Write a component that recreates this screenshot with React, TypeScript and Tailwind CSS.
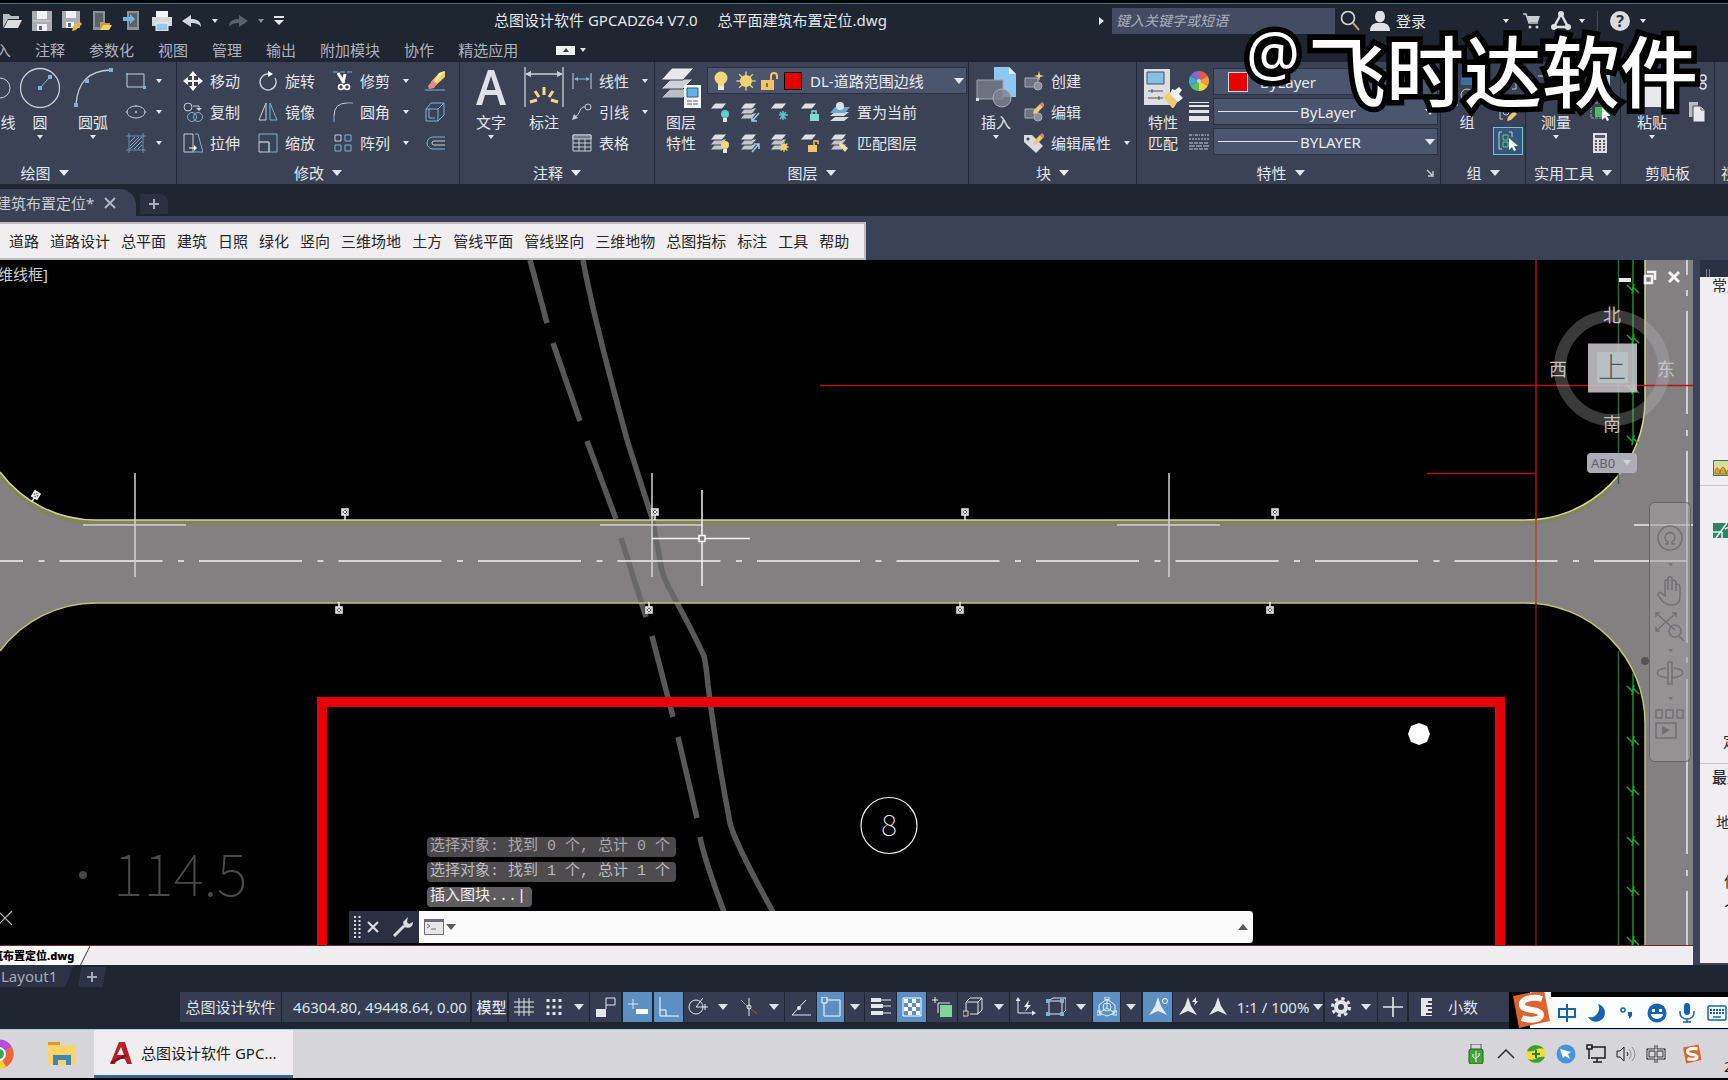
import React from 'react';

type Kids = { children?: React.ReactNode };

function Svg({ w = 20, h = 20, box, children }: Kids & { w?: number; h?: number; box?: string }) {
  return (
    <svg width={w} height={h} viewBox={box ?? `0 0 ${w} ${h}`} fill="none" className="block shrink-0" aria-hidden="true">
      {children}
    </svg>
  );
}

function Caret({ big = false, up = false }: { big?: boolean; up?: boolean }) {
  return big ? (
    <Svg w={10} h={6}>
      <path d={up ? 'M0 6h10L5 0z' : 'M0 0h10L5 6z'} fill="currentColor" />
    </Svg>
  ) : (
    <Svg w={6} h={4}>
      <path d="M0 0h6L3 4z" fill="currentColor" />
    </Svg>
  );
}

const G = '#c9cdd6';
const B = '#7fb2d4';

/* ---------- quick access ---------- */
const quick: Record<string, React.ReactNode> = {
  打开: (
    <Svg>
      <path d="M1 17V3h6l2 2h8v3H6z" fill="#b9bcc2" />
      <path d="M6 9h14l-4 8H2z" fill="#dcdde0" />
    </Svg>
  ),
  保存: (
    <Svg>
      <path d="M0 0h20v20H0z" fill="#a9acb3" />
      <path d="M5 0h10v8H5zM5 13h10v7H5z" fill="#f1f1f3" />
      <path d="M7 15h3v4H7z" fill="#60636c" />
      <path d="M1 10h18" stroke="#d3d5da" />
    </Svg>
  ),
  另存为: (
    <Svg>
      <path d="M0 0h18v17H0z" fill="#a9acb3" />
      <path d="M4 0h10v7H4zM4 11h8v6H4z" fill="#f1f1f3" />
      <path d="M6 12h3v4H6z" fill="#60636c" />
      <path d="M11 16l6-6 3 3-6 6-4 1z" fill="#e5b356" />
    </Svg>
  ),
  打开移动文件: (
    <Svg>
      <path d="M1 0h12v19H1z" fill="#8c9098" />
      <path d="M3 2h8v14H3z" fill="#5c6069" />
      <path d="M8 18V11h4l1 1h5v2h-7z" fill="#c99c3a" />
      <path d="M11 14h9l-3 5H8z" fill="#f3cf74" />
    </Svg>
  ),
  保存到移动: (
    <Svg>
      <path d="M5 0h12v19H5z" fill="#8c9098" />
      <path d="M7 2h8v14H7z" fill="#5c6069" />
      <path d="M1 6h7V3l5 5-5 5v-3H1z" fill="#6fb4e2" />
    </Svg>
  ),
  打印: (
    <Svg>
      <path d="M4 0h12v6H4z" fill="#f3f3f5" />
      <path d="M0 6h20v9H0z" fill="#d6d8dc" />
      <path d="M4 12h12v8H4z" fill="#9cc6e6" stroke="#f3f3f5" />
    </Svg>
  ),
};

/* ---------- ribbon small icons ---------- */
const I = {
  rect: (
    <Svg>
      <path d="M1 3h17v13H1z" stroke={G} />
      <path d="M0 2h2v2H0zM17 15h3v3h-3z" fill={B} />
    </Svg>
  ),
  ellipse: (
    <Svg>
      <ellipse cx="10" cy="10" rx="9" ry="6" stroke={G} />
      <path d="M9 9h2v2H9zM9 3h2v2H9zM0 9h2v2H0zM18 9h2v2h-2z" fill={B} />
    </Svg>
  ),
  hatch: (
    <Svg>
      <path d="M3 0v20M17 0v20M0 3h20M0 17h20" stroke={B} opacity=".7" />
      <path d="M4 9l5-5M4 13l9-9M4 16L16 4M8 16l8-8M12 16l4-4" stroke={B} />
    </Svg>
  ),
  move: (
    <Svg>
      <path d="M10 2v16M2 10h16" stroke="#fff" strokeWidth="2" />
      <path d="M10 0l4 5H6zM10 20l4-5H6zM0 10l5-4v8zM20 10l-5-4v8z" fill="#fff" />
    </Svg>
  ),
  rotate: (
    <Svg>
      <path d="M11 3a8 8 0 1 0 6 4" stroke={G} strokeWidth="1.4" />
      <path d="M10 0l5 3-5 3z" fill="#fff" />
    </Svg>
  ),
  trim: (
    <Svg>
      <path d="M0 1h20" stroke={B} strokeDasharray="5 2" />
      <path d="M5 2l6 10M12 3l-2 9" stroke="#fff" strokeWidth="3" />
      <circle cx="8" cy="16" r="2.5" stroke="#fff" strokeWidth="1.5" />
      <circle cx="14" cy="16" r="2.5" stroke="#fff" strokeWidth="1.5" />
    </Svg>
  ),
  erase: (
    <Svg>
      <path d="M14 2l6-2v6L10 15l-4-4z" fill="#f2ce6d" />
      <path d="M14 2l6-2-11 13z" fill="#fbe7a8" />
      <path d="M8 9l4 4-3 4-5 1-1-3z" fill="#e58a86" />
      <path d="M0 19h20" stroke={B} />
    </Svg>
  ),
  copy: (
    <Svg>
      <circle cx="5" cy="5" r="4" stroke={G} />
      <circle cx="9" cy="15" r="4.5" stroke={B} />
      <circle cx="15" cy="15" r="4.5" stroke={B} />
      <path d="M10 4h6v3" stroke={G} />
      <path d="M13 6h6l-3 3z" fill={G} />
    </Svg>
  ),
  mirror: (
    <Svg>
      <path d="M8 1v17H1z" stroke={G} />
      <path d="M12 1v17h7z" stroke={B} />
    </Svg>
  ),
  fillet: (
    <Svg>
      <path d="M1 20V14" stroke={B} />
      <path d="M1 14Q1 1 14 1" stroke={G} />
      <path d="M14 1h6" stroke={B} />
    </Svg>
  ),
  explode: (
    <Svg>
      <path d="M1 7h12v12H1zM1 7l5-6h13l-6 6M19 1v12l-6 6M4 7v9h6" stroke={B} />
    </Svg>
  ),
  stretch: (
    <Svg>
      <path d="M1 1h9v18H1z" stroke={G} />
      <path d="M12 1h3l5 18H10" stroke={B} />
      <path d="M6 15h7" stroke="#fff" />
      <path d="M11 12l3 3-3 3z" fill="#fff" />
    </Svg>
  ),
  scale: (
    <Svg>
      <path d="M1 1h18v18H11V9H1z" stroke={B} />
      <path d="M1 9h10v10H1z" stroke={G} />
    </Svg>
  ),
  array: (
    <Svg>
      <path d="M2 2h6v6H2z" stroke={G} />
      <path d="M12 2h6v6h-6zM2 12h6v6H2zM12 12h6v6h-6z" stroke={B} />
    </Svg>
  ),
  offset: (
    <Svg>
      <path d="M20 4H8a6 6 0 0 0 0 12h12" stroke={B} />
      <path d="M20 8H9a2 2 0 0 0 0 4h11" stroke={G} />
    </Svg>
  ),
  linear: (
    <Svg>
      <path d="M1 2v16M19 2v16" stroke={G} />
      <path d="M3 8h14" stroke={B} />
      <path d="M2 8l4-2v4zM18 8l-4-2v4z" fill={B} />
    </Svg>
  ),
  leader: (
    <Svg>
      <circle cx="16" cy="5" r="3" stroke={G} />
      <path d="M13 5C7 4 9 12 3 15" stroke={G} />
      <path d="M0 18l2-6 4 4z" fill={G} />
    </Svg>
  ),
  table: (
    <Svg>
      <path d="M1 2h18v16H1zM1 10h18M1 14h18M7 6v12M13 6v12" stroke={G} />
      <path d="M1 2h18v4H1z" stroke={G} fill="#737a8b" />
    </Svg>
  ),
};

function Stack({ n, badge }: { n: 1 | 3; badge: React.ReactNode }) {
  return (
    <Svg>
      {n === 3 && (
        <g fill="#c3c6cd" stroke="#3b4256">
          <path d="M0 17l5-6h12l-5 6z" />
          <path d="M0 12l5-6h12l-5 6z" />
        </g>
      )}
      <path d="M0 7l5-6h12l-5 6z" fill="#dddee2" stroke="#3b4256" />
      {badge}
    </Svg>
  );
}

const bulb = (c: string) => (
  <g>
    <circle cx="15" cy="12" r="4" fill={c} />
    <path d="M13 16h4v4h-4z" fill="#e5e7eb" />
  </g>
);
const sunRays = (cx: number, cy: number, r: number) => (
  <g stroke="#f0cf70" strokeWidth="1.4">
    <circle cx={cx} cy={cy} r={r} fill="#f6d679" stroke="none" />
    {[0, 45, 90, 135].map((a) => (
      <path key={a} d={`M${cx - r * 1.6} ${cy}h${r * 3.2}`} transform={`rotate(${a} ${cx} ${cy})`} />
    ))}
  </g>
);

const layerTools1: [string, React.ReactNode][] = [
  ['关闭图层', <Stack n={1} badge={bulb('#5fd0c9')} />],
  ['隔离图层', <Stack n={3} badge={<path d="M19 11l-6 7M12 14v5h5" stroke="#9ecbea" strokeWidth="1.5" />} />],
  ['冻结图层', <Stack n={1} badge={<path d="M13 9v9M9 13h9M10 10l6 7M16 10l-6 7" stroke="#58c4c4" strokeWidth="1.5" />} />],
  [
    '锁定图层',
    <Stack
      n={1}
      badge={
        <g>
          <path d="M12 12V9h4v3" stroke="#7fdcd2" strokeWidth="1.5" />
          <path d="M10 12h9v7h-9z" fill="#7fdcd2" />
        </g>
      }
    />,
  ],
];
const layerTools2: [string, React.ReactNode][] = [
  ['打开所有图层', <Stack n={3} badge={bulb('#f6d679')} />],
  ['取消隔离', <Stack n={3} badge={<path d="M12 19l7-8M14 11h5v5" stroke="#9ecbea" strokeWidth="1.5" />} />],
  ['解冻所有图层', <Stack n={3} badge={sunRays(14, 14, 3)} />],
  [
    '解锁图层',
    <Stack
      n={1}
      badge={
        <g>
          <path d="M14 12V8h4v3" stroke="#f0c565" strokeWidth="1.5" />
          <path d="M8 12h9v7H8z" fill="#f0c565" />
        </g>
      }
    />,
  ],
];

const blockBase = (
  <g>
    <path d="M1 7h13v9H1z" fill="#6d7280" stroke="#a9adb6" />
    <circle cx="14" cy="15" r="4" fill="#8a8e99" stroke="#a9adb6" />
  </g>
);
const pencil = (
  <g>
    <path d="M10 8l6-6 3 3-6 6-4 1z" fill="#ecc871" />
    <path d="M16 2l2-2 3 3-2 2z" fill="#e77f78" />
  </g>
);

/* ---------- ribbon parts ---------- */
function Panel({
  title,
  caret = true,
  width,
  children,
  launcher = false,
  titlePad = '',
}: Kids & { title: string; caret?: boolean; width: string; launcher?: boolean; titlePad?: string }) {
  return (
    <section className={`flex h-full shrink-0 flex-col border-r border-[#222838] pt-[3px] ${width}`}>
      <div className="flex h-24">{children}</div>
      <div className={`relative flex flex-1 items-center justify-center gap-2 whitespace-nowrap ${titlePad}`}>
        <span>{title}</span>
        {caret && <Caret big />}
        {launcher && (
          <span className="absolute right-1.5">
            <Svg w={8} h={8}>
              <path d="M1 1l5 5M7 2v5H2" stroke={G} strokeWidth="1.4" />
            </Svg>
          </span>
        )}
      </div>
    </section>
  );
}

function Big({ icon, label, label2, caret, width }: { icon: React.ReactNode; label: string; label2?: string; caret?: boolean; width: string }) {
  return (
    <button type="button" className={`flex shrink-0 flex-col items-center ${width}`}>
      <span className="flex h-11 items-center">{icon}</span>
      <span className="whitespace-nowrap leading-[26px]">{label}</span>
      {label2 && <span className="leading-4">{label2}</span>}
      {caret && <Caret />}
    </button>
  );
}

function Small({ icon, label, caret, width = '' }: { icon: React.ReactNode; label: string; caret?: boolean; width?: string }) {
  return (
    <button type="button" className={`flex h-[31px] shrink-0 items-center gap-[7px] whitespace-nowrap ${width}`}>
      {icon}
      <span>{label}</span>
      {caret && (
        <span className="ml-1.5">
          <Caret />
        </span>
      )}
    </button>
  );
}

function Bare({ icon, name, caret }: { icon: React.ReactNode; name: string; caret?: boolean }) {
  return (
    <button type="button" aria-label={name} className="flex h-[31px] shrink-0 items-center gap-2.5">
      {icon}
      {caret && <Caret />}
    </button>
  );
}

function Combo({ name, value, children }: Kids & { name: string; value: string }) {
  return (
    <label className="relative flex h-[27px] w-full items-center border border-[#2a3143] bg-[#4b556e] pr-2">
      {children}
      <select aria-label={name} className="min-w-0 flex-1 appearance-none bg-transparent text-[15px] text-[#e8eaf0] outline-none">
        <option>{value}</option>
      </select>
      <span className="absolute right-0.5">
        <Caret big />
      </span>
    </label>
  );
}

function TitleBar() {
  return (
    <header className="flex h-[38px] shrink-0 items-center border-t-[3px] border-black bg-[#202532] text-[#e4e6ec] shadow-[inset_0_1px_0_#2c7a8c]">
      <div className="flex w-[494px] shrink-0 items-center gap-2.5 pl-[2px]">
        {Object.entries(quick).map(([k, v]) => (
          <button key={k} type="button" aria-label={k}>
            {v}
          </button>
        ))}
        <button type="button" aria-label="放弃" className="flex items-center gap-2.5">
          <Svg>
            <path d="M0 10l9-6v4c6 0 10 2 10 8-2-3-5-4-10-4v4z" fill="#d3d6dc" />
          </Svg>
          <Caret />
        </button>
        <button type="button" aria-label="重做" className="flex items-center gap-2.5 text-[#8b909c]">
          <Svg>
            <path d="M20 10l-9-6v4C5 8 1 10 1 16c2-3 5-4 10-4v4z" fill="#5b606d" />
          </Svg>
          <Caret />
        </button>
        <button type="button" aria-label="自定义快速访问工具栏">
          <Svg w={10} h={10}>
            <path d="M0 0h10v2H0zM0 4h10L5 9z" fill="#e4e6ec" />
          </Svg>
        </button>
      </div>
      <h1 className="flex shrink-0 gap-5 whitespace-nowrap pb-px">
        <span>总图设计软件 GPCADZ64 V7.0</span>
        <span>总平面建筑布置定位.dwg</span>
      </h1>
      <div className="ml-auto flex shrink-0 items-center pr-[82px]">
        <Svg w={6} h={8}>
          <path d="M0 0l5 4-5 4z" fill="#e4e6ec" />
        </Svg>
        <input
          type="text"
          aria-label="搜索"
          placeholder="键入关键字或短语"
          className="ml-[7px] h-[26px] w-[223px] bg-[#444c63] px-1 text-sm italic text-white outline-none placeholder:text-[#a9afbd]"
        />
        <button type="button" aria-label="查找" className="ml-[5px]">
          <Svg>
            <circle cx="8" cy="7" r="6.5" stroke="#d7dae0" strokeWidth="1.6" />
            <path d="M13 12l6 7" stroke="#b8a27a" strokeWidth="2" />
          </Svg>
        </button>
        <button type="button" className="ml-2.5 flex items-center gap-1.5">
          <Svg>
            <ellipse cx="10" cy="5.5" rx="5" ry="6" fill="#dfe1e6" />
            <path d="M0 20c0-6 4-8 7-8h6c3 0 7 2 7 8z" fill="#dfe1e6" />
          </Svg>
          <span>登录</span>
          <span className="ml-[71px]">
            <Caret />
          </span>
        </button>
        <button type="button" aria-label="购物车" className="ml-[14px]">
          <Svg w={18} h={18}>
            <path d="M0 2h3l3 9h9" stroke="#c9ccd3" strokeWidth="1.5" />
            <path d="M4 4h13l-2 6H6z" fill="#c9ccd3" />
            <circle cx="7" cy="15" r="1.5" fill="#c9ccd3" />
            <circle cx="14" cy="15" r="1.5" fill="#c9ccd3" />
          </Svg>
        </button>
        <button type="button" aria-label="Autodesk 应用" className="ml-2.5 flex items-center gap-2">
          <Svg>
            <path d="M10 3L3 16h14z" stroke="#dcdee3" strokeWidth="2.5" />
            <circle cx="10" cy="3" r="3" fill="#dcdee3" />
            <circle cx="3" cy="16" r="3" fill="#dcdee3" />
            <circle cx="17" cy="16" r="3" fill="#dcdee3" />
          </Svg>
          <Caret />
        </button>
        <span className="ml-3 h-5 w-px bg-[#454b5a]" />
        <button type="button" aria-label="帮助" className="ml-3 flex items-center gap-2.5">
          <span className="flex size-5 items-center justify-center rounded-full bg-[#d9dbe0] text-base leading-none font-bold text-[#2a2f3d]">?</span>
          <Caret />
        </button>
      </div>
    </header>
  );
}

function MenuTabs() {
  return (
    <nav className="flex h-6 shrink-0 items-center gap-6 overflow-hidden whitespace-nowrap bg-[#202532] text-[#aeb3bf]">
      <a href="#ru" className="-ml-1">入</a>
      {['注释', '参数化', '视图', '管理', '输出', '附加模块', '协作', '精选应用'].map((t) => (
        <a key={t} href={`#${t}`}>
          {t}
        </a>
      ))}
      <button type="button" aria-label="最小化功能区" className="ml-3.5 flex items-center gap-[5px] text-[#dfe2e8]">
        <span className="flex h-[9px] w-[19px] items-center justify-center bg-[#f2f3f5] text-[#3a3f4c]">
          <Svg w={6} h={4}>
            <path d="M0 4h6L3 0z" fill="currentColor" />
          </Svg>
        </span>
        <Caret />
      </button>
    </nav>
  );
}

function Ribbon() {
  return (
    <div className="flex h-[122px] shrink-0 overflow-hidden bg-[#3b4256] text-[#e3e6ed]">
      <Panel title="绘图" width="w-[177px]" titlePad="pr-[87px]">
        <Big
          width="w-4"
          label="线"
          icon={
            <Svg w={24} h={44}>
              <circle cx="4" cy="23" r="10" stroke={G} />
            </Svg>
          }
        />
        <Big
          width="w-12"
          label="圆"
          caret
          icon={
            <Svg w={42} h={42}>
              <circle cx="21" cy="22" r="19.5" stroke={G} strokeWidth="1.3" />
              <path d="M21 22L31 11" stroke={B} />
              <path d="M19 20h4v4h-4zM29 9h4v4h-4z" fill={B} />
            </Svg>
          }
        />
        <Big
          width="w-[58px]"
          label="圆弧"
          caret
          icon={
            <Svg w={42} h={42}>
              <path d="M4 38C6 16 16 5 39 4" stroke={G} strokeWidth="1.3" />
              <path d="M2 37h4v4H2zM13 13h4v4h-4zM37 2h4v4h-4z" fill={B} />
            </Svg>
          }
        />
        <div className="ml-1">
          <Bare name="矩形" icon={I.rect} caret />
          <Bare name="椭圆" icon={I.ellipse} caret />
          <Bare name="图案填充" icon={I.hatch} caret />
        </div>
      </Panel>

      <Panel title="修改" width="w-[283px]">
        <div className="ml-1.5 w-[75px] shrink-0">
          <Small icon={I.move} label="移动" />
          <Small icon={I.copy} label="复制" />
          <Small icon={I.stretch} label="拉伸" />
        </div>
        <div className="w-[75px] shrink-0">
          <Small icon={I.rotate} label="旋转" />
          <Small icon={I.mirror} label="镜像" />
          <Small icon={I.scale} label="缩放" />
        </div>
        <div className="w-[92px] shrink-0">
          <Small icon={I.trim} label="修剪" caret />
          <Small icon={I.fillet} label="圆角" caret />
          <Small icon={I.array} label="阵列" caret />
        </div>
        <div>
          <Bare name="删除" icon={I.erase} />
          <Bare name="分解" icon={I.explode} />
          <Bare name="偏移" icon={I.offset} />
        </div>
      </Panel>

      <Panel title="注释" width="w-[195px]">
        <Big
          width="ml-1 w-[54px]"
          label="文字"
          caret
          icon={
            <Svg w={34} h={40}>
              <path d="M2 38L14 3h6l12 35h-6l-3-10H11L8 38zM12.5 23h9L17 9z" fill="#dfe1e6" fillRule="evenodd" />
            </Svg>
          }
        />
        <Big
          width="w-[52px]"
          label="标注"
          icon={
            <Svg w={40} h={42}>
              <path d="M1 1v40M39 1v40M2 8h36" stroke={G} strokeWidth="1.3" />
              <path d="M1 8l6-3v6zM39 8l-6-3v6z" fill={G} />
              <path d="M20 21v8M11 25l4 6M29 25l-4 6M6 36l7-2M34 36l-7-2" stroke="#f2d987" strokeWidth="3" />
            </Svg>
          }
        />
        <div className="ml-0.5">
          <Small icon={I.linear} label="线性" caret />
          <Small icon={I.leader} label="引线" caret />
          <Small icon={I.table} label="表格" />
        </div>
      </Panel>

      <Panel title="图层" width="w-[314px]">
        <Big
          width="w-[52px]"
          label="图层"
          label2="特性"
          icon={
            <Svg w={42} h={42}>
              <path d="M1 32l10-10h22L23 32z" fill="#b9bdc6" stroke="#3b4256" />
              <path d="M1 23l10-10h22L23 23z" fill="#cfd2d8" stroke="#3b4256" />
              <path d="M1 14L12 2h22L23 14z" fill="#e8e9ec" stroke="#3b4256" />
              <path d="M24 19h17v23H24z" fill="#f4f5f7" />
              <path d="M27 22h11v9H27z" fill="#62b2e4" stroke="#33618a" />
              <path d="M27 35h11M27 38h11" stroke="#5f6570" strokeDasharray="5 1" />
            </Svg>
          }
        />
        <div className="flex flex-1 flex-col pr-px">
          <div className="flex h-[31px] items-center">
            <Combo name="图层" value="DL-道路范围边线">
              <span className="flex items-center gap-1 pr-2 pl-1">
                <Svg>
                  <circle cx="9" cy="7" r="6.5" fill="#f6d679" />
                  <path d="M6 12h6v3H6z" fill="#f6d679" />
                  <path d="M6 15h6v4H6z" fill="#e7e9ed" />
                </Svg>
                <Svg>{sunRays(10, 10, 6)}</Svg>
                <Svg>
                  <path d="M11 9V5q0-3 3-3t3 3v3" stroke="#f0c565" strokeWidth="2" />
                  <path d="M1 9h13v10H1z" fill="#f0c565" />
                  <path d="M7 12v4" stroke="#6b5320" strokeWidth="1.5" />
                </Svg>
                <span className="size-[18px] border border-black bg-[#e60000]" />
              </span>
            </Combo>
          </div>
          {[layerTools1, layerTools2].map((row, i) => (
            <div key={i} className="flex h-[31px] items-center gap-2.5 pl-[3px]">
              {row.map(([n, ic]) => (
                <Bare key={n} name={n} icon={ic} />
              ))}
              <Small
                label={i ? '匹配图层' : '置为当前'}
                icon={
                  i ? (
                    <Stack n={3} badge={<path d="M10 9l8 6-3 4-6-7z" fill="#f3dfae" />} />
                  ) : (
                    <Svg>
                      <path d="M0 19l5-4h14l-5 4zM0 14l5-4h14l-5 4z" fill="#d7dade" />
                      <path d="M0 11l5-6h15l-5 6z" fill="#69a9dc" />
                      <circle cx="10" cy="4" r="4" fill="#dfe1e6" />
                    </Svg>
                  )
                }
              />
            </div>
          ))}
        </div>
      </Panel>

      <Panel title="块" width="w-[168px]">
        <Big
          width="w-[54px]"
          label="插入"
          caret
          icon={
            <Svg w={42} h={42}>
              <path d="M19 1h15l7 7v23H19z" fill="#8cc8f2" />
              <path d="M34 1v7h7z" fill="#dcecf8" />
              <path d="M2 14h26v19H2z" fill="#6d7280" stroke="#9ea3ad" />
              <circle cx="27" cy="32" r="9" fill="#7e838f" fillOpacity=".8" stroke="#a9adb6" />
              <path d="M1 32h3v3H1z" fill="#cfe6f7" />
            </Svg>
          }
        />
        <div className="ml-px">
          <Small
            label="创建"
            icon={
              <Svg>
                {blockBase}
                <path d="M15 0l1 4 4 1-4 1-1 4-1-4-4-1 4-1z" fill="#f6d679" />
              </Svg>
            }
          />
          <Small
            label="编辑"
            icon={
              <Svg>
                {blockBase}
                {pencil}
              </Svg>
            }
          />
          <Small
            label="编辑属性"
            caret
            icon={
              <Svg>
                <path d="M0 2h8l11 11-7 7L0 9z" fill="#d9dbdf" />
                <circle cx="4" cy="6" r="1.5" fill="#3b4256" />
                {pencil}
              </Svg>
            }
          />
        </div>
      </Panel>

      <Panel title="特性" width="w-[304px]" launcher titlePad="pr-4">
        <Big
          width="w-[52px]"
          label="特性"
          label2="匹配"
          icon={
            <Svg w={42} h={42}>
              <path d="M2 3h26v36H2z" fill="#dcdee2" />
              <path d="M5 6h17v12H5z" fill="#86bfe8" stroke="#3d5066" />
              <path d="M6 25h15M6 32h15M10 23v4M17 30v4" stroke="#4a505c" />
              <path d="M21 31l7-5 8 9-5 8z" fill="#efc974" />
              <path d="M28 28l8 8 5-4-4-4 3-4-3-3-4 3-3-1z" fill="#eff0f2" />
            </Svg>
          }
        />
        <div className="flex w-6 flex-col">
          <Bare
            name="颜色"
            icon={
              <Svg>
                {['#e8544e', '#f39a3c', '#f2d34a', '#5bbf62', '#3ea9d8', '#8469c9'].map((c, i) => (
                  <path key={c} d="M10 10V0a10 10 0 0 1 8.660 5z" fill={c} transform={`rotate(${i * 60} 10 10)`} />
                ))}
                <circle cx="10" cy="10" r="2" fill="#cfd2d8" />
              </Svg>
            }
          />
          <Bare
            name="线宽"
            icon={
              <Svg>
                <path d="M0 0h20v1H0zM0 3h20v2H0zM0 8h20v3H0zM0 14h20v5H0z" fill="#e3e5ea" />
              </Svg>
            }
          />
          <Bare
            name="线型"
            icon={
              <Svg>
                <path d="M0 2h20" stroke={G} strokeDasharray="3 1 1 1" />
                <path d="M0 6h20" stroke={G} strokeDasharray="2 1" />
                <path d="M0 10h20M0 16h20" stroke={G} strokeDasharray="4 1" />
                <path d="M0 13h20" stroke={G} strokeDasharray="6 1" />
              </Svg>
            }
          />
        </div>
        <div className="flex flex-1 flex-col gap-[3px] pt-[3px] pr-0.5">
          <Combo name="对象颜色" value="ByLayer">
            <span className="mr-3 ml-[14px] size-5 border border-[#d6d8de] bg-[#e60000]" />
          </Combo>
          <Combo name="对象线宽" value="ByLayer">
            <span className="mr-0.5 ml-1 h-px w-20 bg-[#e3e5ea]" />
          </Combo>
          <Combo name="对象线型" value="BYLAYER">
            <span className="mr-0.5 ml-1 h-px w-20 bg-[#e3e5ea]" />
          </Combo>
        </div>
      </Panel>

      <Panel title="组" width="w-[85px]">
        <Big
          width="w-[52px]"
          label="组"
          icon={
            <Svg w={30} h={42}>
              <path d="M6 5H2v34h4M24 5h4v34h-4" stroke={G} />
              <path d="M9 9h15v10H9z" fill="#3f6f9e" />
              <circle cx="15" cy="29" r="6" stroke={G} />
            </Svg>
          }
        />
        <div className="flex w-[30px] flex-col items-center">
          <Bare
            name="解除编组"
            icon={
              <Svg>
                <path d="M6 6H2v12h4M14 6h4v12h-4" stroke={G} />
                <circle cx="10" cy="12" r="3" stroke={G} />
              </Svg>
            }
          />
          <Bare
            name="组编辑"
            icon={
              <Svg>
                <path d="M5 3H2v14h3M12 3h3v6" stroke={G} />
                <circle cx="8" cy="10" r="3" stroke={G} />
                <path d="M10 15l6-6 3 3-6 6-4 1z" fill="#ecc871" />
              </Svg>
            }
          />
          <button type="button" aria-label="组选择" className="flex h-7 w-[30px] items-center justify-center border border-[#7db8e0] bg-[#35587a]">
            <Svg>
              <path d="M4 1H1v17h3M11 1h3v5" stroke={G} />
              <path d="M5 4h5v5H5zM5 11h5v5H5z" stroke="#5fd07c" />
              <path d="M11 7v12l3-3 2 4 2-1-2-4h4z" fill="#fff" />
            </Svg>
          </button>
        </div>
      </Panel>

      <Panel title="实用工具" width="w-[95px]">
        <Big
          width="w-[60px]"
          label="测量"
          caret
          icon={
            <Svg w={40} h={42}>
              <path d="M2 20h36v12H2z" fill="#e6d9ac" />
              <path d="M2 10h36" stroke={G} />
            </Svg>
          }
        />
        <div className="flex w-7 flex-col items-center">
          <Bare
            name="快速选择"
            icon={
              <Svg>
                <path d="M0 4h20v13H0z" fill="#a9cfe8" />
              </Svg>
            }
          />
          <Bare
            name="全部选择"
            icon={
              <Svg>
                <path d="M1 1h14v15H1z" stroke="#5fd07c" strokeDasharray="3 1" />
                <path d="M5 5h9v10H5z" fill="#4eb56b" />
                <path d="M12 6v12l3-3 2 4 2-1-2-4h4z" fill="#fff" />
              </Svg>
            }
          />
          <Bare
            name="快速计算器"
            icon={
              <Svg>
                <path d="M3 0h14v20H3z" fill="#dcdee2" />
                <path d="M5 2h10v3H5z" fill="#555b68" />
                <path d="M6 7v11M10 7v11M14 7v11" stroke="#555b68" strokeWidth="2" strokeDasharray="2 1" />
              </Svg>
            }
          />
        </div>
      </Panel>

      <Panel title="剪贴板" caret={false} width="w-[94px]">
        <Big
          width="w-[62px]"
          label="粘贴"
          caret
          icon={
            <Svg w={36} h={42}>
              <path d="M4 4h24v34H4z" fill="#8d919b" />
              <path d="M8 12h20v29H8z" fill="#e8e9ec" />
              <path d="M21 12v7h7" stroke="#555b68" />
            </Svg>
          }
        />
        <div className="flex w-7 flex-col items-center">
          <Bare
            name="剪切"
            icon={
              <Svg>
                <path d="M1 8l11 5M1 13l11-5" stroke="#e3e5ea" strokeWidth="1.5" />
                <circle cx="16" cy="7" r="3" stroke="#e3e5ea" strokeWidth="1.5" />
                <circle cx="16" cy="15" r="3" stroke="#e3e5ea" strokeWidth="1.5" />
              </Svg>
            }
          />
          <Bare
            name="复制剪裁"
            icon={
              <Svg>
                <path d="M2 0h9v15H2z" fill="#b9bcc4" />
                <path d="M6 4h8l4 4v12H6z" fill="#e8e9ec" stroke="#3b4256" />
                <path d="M14 4v4h4" stroke="#555b68" />
              </Svg>
            }
          />
        </div>
      </Panel>
      <div className="flex flex-1 items-end overflow-hidden pb-px pl-1.5 whitespace-nowrap">视图</div>
    </div>
  );
}

const plus = (
  <Svg w={10} h={10}>
    <path d="M5 0v10M0 5h10" stroke="currentColor" strokeWidth="2" />
  </Svg>
);

function DocTabs() {
  return (
    <div className="flex h-8 shrink-0 items-end bg-[#202532] text-[#c9ccd5]">
      <div className="flex h-[27px] items-center overflow-hidden rounded-tr-2xl bg-[#3b4256] pr-5 whitespace-nowrap">
        <span className="-ml-1">建筑布置定位*</span>
        <button type="button" aria-label="关闭图形" className="ml-2.5">
          <Svg w={12} h={12}>
            <path d="M1 1l10 10M11 1L1 11" stroke="#b5b9c4" strokeWidth="1.8" />
          </Svg>
        </button>
      </div>
      <button type="button" aria-label="新图形" className="mb-0.5 ml-1 flex h-5 w-7 items-center justify-center rounded-tr-lg bg-[#2b3142] text-[#a9aebb]">
        {plus}
      </button>
    </div>
  );
}

const menus = ['道路', '道路设计', '总平面', '建筑', '日照', '绿化', '竖向', '三维场地', '土方', '管线平面', '管线竖向', '三维地物', '总图指标', '标注', '工具', '帮助'];

function ToolMenus() {
  return (
    <div className="flex h-11 shrink-0 items-end bg-[#3b4258]">
      <nav className="flex h-[38px] shrink-0 items-center gap-[11px] border-y-2 border-r-2 border-[#bcbcc0] bg-[#f0eef1] pr-[15px] pl-[9px] whitespace-nowrap text-[#26262a]">
        {menus.map((m) => (
          <button key={m} type="button">
            {m}
          </button>
        ))}
      </nav>
    </div>
  );
}

/* ---------- drawing ---------- */
const roadTop = 'M0 472A120 120 0 0 0 96 520H1525A120 120 0 0 0 1645 400V260';
const roadBottom = 'M0 651A120 120 0 0 1 96 603H1525A120 120 0 0 1 1645 723V945';

function Cross({ x }: { x: number }) {
  return <path d={`M${x - 52} 525H${x + 51}M${x} 473V577`} stroke="#d4d2d4" strokeWidth="1.5" />;
}

function Lamp({ x, y, s, t }: { x: number; y: number; s: number; t?: string }) {
  return (
    <g stroke="#f0f0f0" strokeWidth="1.5" transform={t}>
      <path d={`M${x} ${y}v${s}`} />
      <path d={`M${x - 3} ${y - 3}h6v6h-6z`} fill="#666" />
      <path d={`M${x - 3} ${y - 3}l6 6m0-6l-6 6`} strokeWidth="1" />
    </g>
  );
}

function Drawing() {
  return (
    <svg viewBox="0 260 1693 685" preserveAspectRatio="xMinYMin slice" fill="none" className="absolute inset-0 h-full w-full" role="img" aria-label="总平面图">
      <path d={`${roadTop}H1693V945H1645V723A120 120 0 0 0 1525 603H96A120 120 0 0 0 0 651z`} fill="#838082" />
      <g transform="translate(0 3)">
        <path d="M0 472A120 120 0 0 0 96 520H1525A120 120 0 0 0 1610 484" stroke="#80835c" strokeWidth="4" />
      </g>
      <g stroke="#646464" strokeOpacity=".88" strokeWidth="5.5">
        <path d="M530 260L547 323M553 343L580 421M587 441L616 519M621 538L646 617M652 636L673 717M678 737L697 818M700 837Q703 855 724 912" />
        <path d="M583 260Q594 320 628 443L652 518L660 560Q661 572 669 588Q692 630 704 656Q706 664 708 685Q716 750 730 823Q735 843 773 912" />
      </g>
      <path d={roadTop} stroke="#d3d68e" strokeWidth="1.5" />
      <path d={roadBottom} stroke="#c3c46c" strokeWidth="1.5" />
      <path d="M-80 561H1687" stroke="#f2f2f2" strokeWidth="1.5" strokeDasharray="103 15.5 6 15" />
      <path d="M1687 260v15M1687 290v6M1687 311v103M1687 430v6M1687 451v192M1687 657v6M1687 679v175M1687 870v6M1687 891v54" stroke="#e8e8e8" strokeWidth="1.5" />
      <Cross x={135} />
      <Cross x={652} />
      <Cross x={1169} />
      <path d="M1634 525H1693" stroke="#e8e8e8" strokeWidth="1.5" />
      <path d="M322 945V702H1500V945" stroke="#e60007" strokeWidth="10" />
      <path d="M1536 260V520M820 385.5H1693M1427 473.5H1536" stroke="#b5121a" strokeWidth="1.5" />
      <path d="M1536 520V603" stroke="#b84148" strokeWidth="1.5" />
      <path d="M1536 603V945" stroke="#7a1216" strokeWidth="1.5" />
      <g strokeWidth="1.5">
        <path d="M1618.5 260V484M1618.5 651V945" stroke="#2c6a30" />
        <path d="M1633 260V440M1633 673V945" stroke="#1f8a2b" />
        {[289, 339, 389, 440, 690, 741, 791, 841, 891, 941].map((y) => (
          <path key={y} d={`M1627 ${y - 4}l6 6M1633 ${y - 2}l6 6M1634 ${y - 5}l-2 10`} stroke="#22a632" />
        ))}
      </g>
      <path d="M702 490V586M652 538.5H750" stroke="#f4f4f4" strokeWidth="1.5" />
      <path d="M699 535.5h6v6h-6z" fill="#838082" stroke="#fff" strokeWidth="1.5" />
      {[345, 655, 965, 1275].map((x) => (
        <Lamp key={x} x={x} y={512} s={8} />
      ))}
      {[339, 649, 960, 1270].map((x) => (
        <Lamp key={x} x={x} y={610} s={-8} />
      ))}
      <Lamp x={36} y={495} s={8} t="rotate(32 36 495)" />
      <path d="M1419 723l8 3 3 8-3 8-8 3-8-3-3-8 3-8z" fill="#fff" />
      <circle cx="889" cy="825.5" r="28" stroke="#f0f0f0" strokeWidth="1.2" />
      <text x="889" y="836" textAnchor="middle" fontSize="30" fill="#e6e6e6" className="font-thin [font-family:'Noto_Sans_CJK_SC',sans-serif]">8</text>
      <circle cx="83" cy="875" r="4" fill="#464646" />
      <text x="113" y="896" fontSize="58" fill="#4a4a4a" className="font-thin [font-family:'Noto_Sans_CJK_SC',sans-serif]">114.5</text>
      <path d="M-2 911l14 14M12 911l-14 14" stroke="#bdbdbd" strokeWidth="1.2" />
      {/* view cube */}
      <circle cx="1612" cy="368" r="52" stroke="#b5b3b6" strokeOpacity=".32" strokeWidth="12" />
      <path d="M1588 343.5h49v49h-49z" fill="#c9c6cb" fillOpacity=".88" />
      <path d="M1597 352h31v31h-31z" fill="#b9c0c4" />
      <g textAnchor="middle" fontSize="18" fill="#c4c2c5">
        <text x="1612" y="322">北</text>
        <text x="1558" y="376">西</text>
        <text x="1666" y="376">东</text>
        <text x="1612" y="431">南</text>
      </g>
      <text x="1612" y="378" textAnchor="middle" fontSize="28" fill="#4e5a63" className="font-light">上</text>
      <rect x="1587" y="453" width="50" height="20" rx="4" fill="#aeacb6" />
      <text x="1591" y="468" fontSize="13" fill="#5f6072">AB0</text>
      <path d="M1623 460h8l-4 5z" fill="#d5d4da" />
      {/* navigation bar */}
      <rect x="1649.5" y="502.5" width="41" height="259" rx="5" fill="#a3a1a3" fillOpacity=".55" stroke="#666467" />
      <circle cx="1645" cy="661" r="4" fill="#555358" />
      <g stroke="#727074" strokeWidth="1.5">
        <circle cx="1670" cy="538" r="12" />
        <path d="M1665 544h3v-2a5 5 0 1 1 4 0v2h3" />
        <path d="M1658 595c2-6 5 0 7 1v-14c0-3 3-3 3 0v-3c0-3 4-3 4 0v3c0-3 4-2 4 1v3c0-3 4-2 4 1v9c0 8-4 9-9 9-6 0-9-4-13-10zM1668 582v8M1672 582v8M1676 586v5" />
        <path d="M1657 614l18 16M1675 614l-18 16M1656 617v-4h4M1672 613h4v4M1656 627v4h4" />
        <circle cx="1675" cy="631" r="6" />
        <path d="M1679 636l5 5M1668 662h4v22h-4zM1666 668c-12 2-12 8 2 10M1674 668c12 2 12 8-2 10" />
        <path d="M1656 710h6v8h-6zM1666 710h7v8h-7zM1677 710h6v8h-6zM1656 723h20v15h-20z" />
      </g>
      <path d="M1662 726l8 4-8 5zM1668 649h5l-2 3zM1668 697h5l-2 3zM1668 563h5l-2 3z" fill="#727074" />
      {/* window buttons */}
      <path d="M1619 278h12v4h-12z" fill="#e8e8e8" />
      <path d="M1647 272h8v8M1645 276h7v7h-7z" stroke="#f2f2f2" strokeWidth="2.5" />
      <path d="M1669 272l10 10M1679 272l-10 10" stroke="#f2f2f2" strokeWidth="3" />
    </svg>
  );
}

function Canvas() {
  return (
    <main className="relative min-h-0 flex-1 overflow-hidden bg-black">
      <Drawing />
      <div className="absolute top-1 -left-0.5 text-[#cfcfcf]">维线框]</div>
      <div className="absolute bottom-0 left-[349px] right-[440px]">
        <div className="mb-1 ml-[78px] flex flex-col items-start gap-[5px] text-[15px] leading-5 [font-family:'Liberation_Mono','Noto_Sans_CJK_SC',monospace]">
          <p className="rounded-sm bg-[#4b484b] pr-1.5 pl-[3px] text-[#a9a7a9]">选择对象: 找到 0 个, 总计 0 个</p>
          <p className="rounded-sm bg-[#4f4c4f] pr-1.5 pl-[3px] text-[#bdbbbd]">选择对象: 找到 1 个, 总计 1 个</p>
          <p className="rounded-sm bg-[#5f5c5f] pr-1.5 pl-[3px] text-[#f0f0f0]">插入图块...|</p>
        </div>
        <div className="mb-0.5 flex h-8 items-center bg-[#2a3041] text-[#d9dbe0]">
          <span className="flex w-[70px] shrink-0 items-center gap-1.5 pl-[5px]">
            <Svg w={7} h={22}>
              <path d="M1 0v22M5.5 0v22" stroke="#d9dbe0" strokeWidth="2" strokeDasharray="2 2" />
            </Svg>
            <button type="button" aria-label="关闭命令行">
              <Svg w={12} h={12}>
                <path d="M1 1l10 10M11 1L1 11" stroke="currentColor" strokeWidth="2.2" />
              </Svg>
            </button>
            <button type="button" aria-label="自定义" className="ml-2">
              <Svg>
                <path d="M1 19L11 9" stroke="currentColor" strokeWidth="3" />
                <path d="M10 5l5-5-1 5 2 2 4-2c0 5-4 7-9 5z" fill="currentColor" />
              </Svg>
            </button>
          </span>
          <label className="flex h-full flex-1 items-center gap-0.5 rounded-r-sm bg-[#fbfbfb] px-[5px] text-[#55585f]">
            <Svg w={20} h={16}>
              <path d="M.5.5h19v15H.5z" fill="#e6e6e8" stroke="#6b6e75" />
              <path d="M0 0h20v3H0z" fill="#6b6e75" />
              <path d="M3 5l3 2-3 2M7 10h5" stroke="#6b6e75" />
            </Svg>
            <Caret big />
            <input type="text" aria-label="命令" className="h-full min-w-0 flex-1 bg-transparent outline-none" />
            <Caret big up />
          </label>
        </div>
      </div>
    </main>
  );
}

function Palette() {
  return (
    <aside className="mb-0.5 ml-[7px] flex w-7 shrink-0 flex-col overflow-hidden bg-[#2b3142] text-[#2b2b2f]">
      <div className="flex h-[17px] shrink-0 items-end pl-1.5 text-[#7d8290]">
        <span className="h-2 w-px bg-current" />
        <span className="ml-0.5 h-2 w-px bg-current" />
      </div>
      <div className="flex flex-1 flex-col bg-[#f0eef2] leading-5 whitespace-nowrap *:shrink-0">
        <span className="-mt-0.5 h-[185px] pl-3">常用</span>
        <span className="flex h-[26px] items-start border-b border-[#c9c7cd] pl-[13px]">
          <Svg w={20} h={16}>
            <path d="M.5.5h19v15H.5z" fill="#d9dc9c" stroke="#3c7a4a" />
            <path d="M2 14c0-8 4-8 5 0 1-9 5-9 6 0 1-6 4-5 5 0z" fill="#e0a22f" stroke="#8a7a20" />
          </Svg>
        </span>
        <span className="flex h-[245px] pt-[37px] pl-[13px]">
          <Svg w={20} h={15}>
            <path d="M0 0h20v15H0z" fill="#2e8367" />
            <path d="M0 9h9M3 15L14 0M12 6l8-4M9 9v6" stroke="#e9f2ee" strokeWidth="1.5" />
          </Svg>
        </span>
        <span className="h-8 pl-[23px]">定</span>
        <span className="h-[49px] border-t border-[#c9c7cd] pt-[3px] pl-[12px] font-medium">最近</span>
        <span className="h-[59px] pl-4">地形</span>
        <span className="h-[26px] pl-6">件</span>
        <span className="pl-6">个</span>
      </div>
    </aside>
  );
}

function SheetStrip() {
  return (
    <div className="flex h-5 shrink-0 items-center overflow-hidden border-t border-[#6a2a30] bg-[#efedf0] text-[11px] font-black whitespace-nowrap text-black">
      <span className="flex h-full items-center bg-[#fbfbfb]">
        <span className="-ml-2 w-[88px]">筑布置定位.dwg</span>
      </span>
      <Svg w={10} h={20}>
        <path d="M0 0h10L0 20z" fill="#fbfbfb" />
        <path d="M10 0L0 20" stroke="#3a3a3e" />
      </Svg>
    </div>
  );
}

const chip = 'flex h-full shrink-0 items-center justify-center';

const W = '#e3e6ed';
type StatusItem = { n: string; w: string; on?: boolean; ic?: React.ReactNode; sep?: boolean };
const caretItem = (n: string, sep = false): StatusItem => ({ n, w: 'w-[22px]', ic: <Caret big />, sep });

const flake = <path d="M10 0l3 9 6 9-9-4-9 4 6-9z" fill={W} />;

const statusItems: StatusItem[] = [
  { n: '栅格', w: 'w-[30px]', ic: <Svg><path d="M5 1v18M10 1v18M15 1v18M0 5h20M0 10h20M0 15h20" stroke={W} /></Svg> },
  { n: '捕捉', w: 'w-[29px]', ic: <Svg><path d="M4 2v16M10 2v16M16 2v16" stroke={W} strokeWidth="3" strokeDasharray="3 3.5" /></Svg> },
  caretItem('捕捉设置', true),
  { n: '推断约束', w: 'w-[32px]', sep: true, ic: <Svg><path d="M0 12h10v8H0z" fill={W} /><path d="M10 12V1h9v7h-9" stroke={W} /></Svg> },
  { n: '动态输入', w: 'w-[31px]', on: true, ic: <Svg><path d="M5 2v10M0 7h10" stroke={W} /><path d="M8 12h12v5H8z" fill="#fff" /></Svg> },
  { n: '正交', w: 'w-[31px]', on: true, ic: <Svg><path d="M1 0v19h19M1 13h6v6" stroke="#fff" /></Svg> },
  { n: '极轴', w: 'w-[28px]', ic: <Svg><circle cx="8" cy="10" r="7" stroke={W} /><path d="M8 10h12M8 10l7-9M17 7v6" stroke={W} /></Svg> },
  caretItem('极轴设置'),
  { n: '等轴测', w: 'w-[29px]', ic: <Svg><path d="M10 1v18" stroke={W} /><path d="M2 3l8 8" stroke="#7fae86" /><path d="M10 10l8 7" stroke="#a05c5c" /><circle cx="10" cy="10" r="2" stroke={W} /></Svg> },
  caretItem('等轴测设置', true),
  { n: '对象追踪', w: 'w-[31px]', ic: <Svg><path d="M20 18H1L15 3" stroke={W} /><circle cx="8" cy="11" r="2" fill={W} /></Svg> },
  { n: '对象捕捉', w: 'w-[29px]', on: true, ic: <Svg><path d="M3 3h16v16H3z" stroke="#fff" /><path d="M1 0h5v6H1z" stroke="#fff" fill="#5c8fc2" /></Svg> },
  { n: '对象捕捉设置', w: 'w-5', sep: true, ic: <Caret big /> },
  { n: '线宽', w: 'w-[31px]', ic: <Svg><path d="M0 3h10M0 9h12M0 16h12" stroke={W} strokeWidth="4" /><path d="M0 3h20M0 9h20M0 16h20" stroke={W} /></Svg> },
  {
    n: '透明度',
    w: 'w-[31px]',
    on: true,
    ic: (
      <Svg>
        <path d="M1 1h18v18H1z" stroke="#fff" />
        {[0, 1, 2, 3].map((r) => (
          <path key={r} d={r % 2 ? `M6 ${4 + r * 4}h12` : `M2 ${4 + r * 4}h12`} stroke="#fff" strokeWidth="4" strokeDasharray="4 4" />
        ))}
      </Svg>
    ),
  },
  { n: '选择循环', w: 'w-[31px]', sep: true, ic: <Svg><path d="M3 0v6M0 3h6M6 16V6h12" stroke={W} /><path d="M8 8h12v12H8z" fill="#7fd49a" /></Svg> },
  { n: '三维对象捕捉', w: 'w-[30px]', ic: <Svg><path d="M3 5h12v12H7M3 5l4-4h12v12l-4 4M15 5l4-4M3 5v9" stroke={W} /><path d="M0 14h5v5H0z" stroke="#e6c9b0" /></Svg> },
  caretItem('三维捕捉设置', true),
  { n: '动态 UCS', w: 'w-[32px]', ic: <Svg><path d="M2 3v13h14" stroke={W} /><path d="M2 0l2.500 4h-5zM20 16l-4-2.500v5zM13 3L8 10h3l-2 5 6-7h-3z" fill={W} /></Svg> },
  { n: '选择过滤', w: 'w-[28px]', ic: <Svg><path d="M3 4h13v13H3zM4 3l3-2h13v12l-3 3" stroke={W} /><path d="M0 2h4v4H0zM14 2h4v4h-4zM0 15h4v4H0zM14 15h4v4h-4z" fill={B} /></Svg> },
  caretItem('过滤设置'),
  { n: '小控件', w: 'w-[29px]', on: true, ic: <Svg><path d="M10 2l8 6v8l-8 3-8-3V8zM10 2v9l-8 5M10 11l8 5" stroke="#dcebf7" /><circle cx="10" cy="10" r="4" stroke="#dcebf7" /><path d="M8 0h4v3H8zM0 14h4v4H0zM16 14h4v4h-4z" stroke="#dcebf7" /></Svg> },
  { n: '小控件设置', w: 'w-[21px]', sep: true, ic: <Caret big /> },
  { n: '注释可见性', w: 'w-[31px]', on: true, ic: <Svg>{flake}<circle cx="17" cy="4" r="2.5" stroke="#fff" /></Svg> },
  { n: '自动缩放', w: 'w-[30px]', ic: <Svg>{flake}<path d="M18 0l-4 5h3l-1 4 4-5h-2z" fill={W} /></Svg> },
  { n: '注释', w: 'w-[30px]', ic: <Svg>{flake}</Svg> },
];

function StatusBar() {
  return (
    <footer className="flex h-[37px] shrink-0 items-start bg-[#202532] text-[#dfe2ea]">
      <div className="ml-[180px] flex h-[30px] min-w-0 flex-1 whitespace-nowrap bg-[#363d52]">
        <span className={`${chip} w-[102px] border-r border-[#202532]`}>总图设计软件</span>
        <span className={`${chip} w-[190px] border-r-2 border-[#202532] pl-2`}>46304.80, 49448.64, 0.00</span>
        <button type="button" className={`${chip} w-[37px] border-r-2 border-[#202532] pl-1 font-medium`}>模型</button>
        {statusItems.map((s) => (
          <button key={s.n} type="button" aria-label={s.n} className={`${chip} ${s.w} ${s.on ? 'border-x border-[#202532] bg-[#5c8fc2]' : ''} ${s.sep ? 'border-r border-[#202532]' : ''}`}>
            {s.ic}
          </button>
        ))}
        <button type="button" className={`${chip} w-[92px] gap-1 border-r-2 border-[#202532] pl-1`}>
          1:1 / 100%
          <Caret big />
        </button>
        <button type="button" aria-label="切换工作空间" className={`${chip} w-[53px] gap-2.5 border-r border-[#202532]`}>
          <Svg>
            <circle cx="10" cy="10" r="5" stroke={W} strokeWidth="4" />
            <circle cx="10" cy="10" r="8.5" stroke={W} strokeWidth="3" strokeDasharray="3.340 3.340" />
          </Svg>
          <Caret big />
        </button>
        <button type="button" aria-label="注释监视器" className={`${chip} w-[31px] border-r-2 border-[#202532]`}>
          <Svg>
            <path d="M10 0v20M0 10h20" stroke={W} strokeWidth="1.6" />
          </Svg>
        </button>
        <button type="button" className={`${chip} gap-3 pl-[7px]`}>
          <Svg>
            <path d="M5 1h11v3h-4v2h4v2h-6v2h6v2h-4v2h4v2h-6v2h6v1H5z" fill={W} />
          </Svg>
          小数
        </button>
      </div>
      <Ime />
    </footer>
  );
}

function SogouS({ size }: { size: number }) {
  return (
    <Svg w={size} h={size} box="0 0 40 40">
      <path d="M2 7L33 1l6 31-31 7z" fill="#e0632f" />
      <path d="M31 10C22 7 10 10 11 16c1 7 19 3 19 10 0 5-12 6-19 3" stroke="#fff" strokeWidth="6" />
    </Svg>
  );
}

function Ime() {
  const c = '#1463b0';
  return (
    <div className="flex h-[37px] w-[219px] shrink-0 items-end overflow-hidden bg-black">
      <div className="mb-px flex h-[31px] w-full items-center bg-[#fcfdfe]">
        <span className="-mt-2 mr-1.5 flex h-[39px] w-[42px] shrink-0 items-center justify-center bg-[linear-gradient(90deg,#000_50%,#fcfdfe_50%)] pl-px">
          <SogouS size={40} />
        </span>
        <div className="flex items-center gap-2.5">
          <Svg>
            <path d="M2 6h16v8H2zM10 1v18" stroke={c} strokeWidth="2" />
          </Svg>
          <Svg>
            <path d="M11 1a9 9 0 0 1-10 13 9 9 0 1 0 10-13z" fill={c} />
          </Svg>
          <Svg>
            <circle cx="6" cy="7" r="2" stroke={c} strokeWidth="1.5" />
            <path d="M11 9h4v4l-3 3v-3h-1z" fill={c} />
          </Svg>
          <Svg>
            <circle cx="10" cy="10" r="9.5" fill={c} />
            <path d="M5 6h3v3H5zM12 6h3v3h-3zM4 11h12a6 5 0 0 1-12 0z" fill="#fff" />
          </Svg>
          <Svg>
            <rect x="7" y="0" width="6" height="12" rx="3" fill={c} />
            <path d="M3 8v2a7 6 0 0 0 14 0V8M10 16v3M6 19h8" stroke={c} strokeWidth="1.5" />
          </Svg>
          <Svg>
            <rect x="1" y="3" width="18" height="14" rx="1" stroke={c} strokeWidth="1.5" />
            <path d="M3 7h14M3 10h14" stroke={c} strokeWidth="2" strokeDasharray="2 1" />
            <path d="M6 14h8" stroke={c} strokeWidth="1.5" />
          </Svg>
        </div>
      </div>
    </div>
  );
}

function Taskbar() {
  return (
    <div className="flex h-[51px] shrink-0 items-stretch overflow-hidden border-t border-b-2 border-t-[#a9cfe2] border-b-black bg-[#d6d5d9] text-[#1c1c20]">
      <button type="button" aria-label="浏览器" className="-ml-4 flex items-center">
        <Svg w={30} h={30}>
          <path d="M15 15L2 8A15 15 0 0 1 28 8z" fill="#b94be0" />
          <path d="M15 15L28 8A15 15 0 0 1 20 29z" fill="#f2643c" />
          <path d="M15 15l7 13A15 15 0 0 1 1 10z" fill="#f6d531" />
          <circle cx="15" cy="15" r="7" fill="#fff" />
          <circle cx="15" cy="15" r="5" fill="#2fae5d" />
        </Svg>
      </button>
      <button type="button" aria-label="文件资源管理器" className="ml-[34px] flex items-center">
        <Svg w={28} h={26}>
          <path d="M0 1h12v5H0z" fill="#d79a2b" />
          <path d="M0 4h28v20H0z" fill="#f8d566" />
          <path d="M5 24V14h18v10h-5v-5h-8v5z" fill="#3d87b8" />
        </Svg>
      </button>
      <button type="button" className="ml-[18px] flex w-[199px] items-center gap-2 border-b-[3px] border-[#2f6b98] bg-[#f0edf0] pl-[15px] whitespace-nowrap">
        <Svg w={24} h={24}>
          <path d="M10 1h6l7 22h-5l-2-5H8l-2 5H1z" fill="#b5202b" />
          <path d="M12 6l3 8H8z" fill="#f0edf0" />
          <path d="M2 22L17 14" stroke="#7e1019" strokeWidth="2" />
        </Svg>
        总图设计软件 GPC...
      </button>
      <div className="ml-auto flex items-center gap-2.5">
        <Svg>
          <path d="M5 0h10v6H5z" fill="#d7d7da" stroke="#55585c" />
          <rect x="3" y="5" width="14" height="15" rx="2" fill="#3fa535" stroke="#2b5f27" />
          <path d="M10 7v11M7 10v3l3 2M13 9v3l-3 2" stroke="#fff" />
        </Svg>
        <Svg>
          <path d="M2 14l8-8 8 8" stroke="#2b2b2f" strokeWidth="1.5" />
        </Svg>
        <Svg>
          <circle cx="10" cy="10" r="9.5" fill="#f4dc33" />
          <path d="M1 7a10 10 0 0 1 17-2C12 2 8 9 1 7zM19 13a10 10 0 0 1-17 2c6 3 10-4 17-2z" fill="#2fa04a" />
          <path d="M10 6v8M6 10h8" stroke="#2f7f3a" strokeWidth="2" />
        </Svg>
        <Svg>
          <circle cx="10" cy="10" r="9.5" fill="#4794dc" />
          <path d="M4 5l11 3-3 2 2 5-5-3-2 2z" fill="#fff" />
        </Svg>
        <Svg>
          <path d="M5 3h14v11H5M11 14v4M7 18h9M1 1h5v4H1zM3 5v10" stroke="#1c1c20" strokeWidth="1.5" />
        </Svg>
        <Svg>
          <path d="M1 7h3l4-4v14l-4-4H1z" stroke="#1c1c20" />
          <path d="M11 8q2 2 0 4" stroke="#1c1c20" />
          <path d="M13 5q4 5 0 10M16 3q6 7 0 14" stroke="#8c8c92" />
        </Svg>
        <Svg>
          <path d="M2 6h16v8H2zM10 1v18" stroke="#2b2b2f" strokeWidth="3" />
          <path d="M2 6h16v8H2zM10 1v18" stroke="#f4f4f6" strokeWidth="1" />
        </Svg>
        <span className="ml-1.5">
          <SogouS size={20} />
        </span>
        <span className="mt-6 ml-3 w-1 overflow-hidden">2</span>
      </div>
    </div>
  );
}

export default function App() {
  return (
    <div className="relative flex h-screen flex-col overflow-hidden bg-[#3b4258] text-[15px] leading-5 [font-family:'Noto_Sans','Noto_Sans_CJK_SC',sans-serif]">
      <TitleBar />
      <MenuTabs />
      <Ribbon />
      <DocTabs />
      <ToolMenus />
      <div className="flex min-h-0 flex-1">
        <div className="flex min-w-0 flex-1 flex-col">
          <Canvas />
          <SheetStrip />
        </div>
        <Palette />
      </div>
      <div className="flex h-[27px] shrink-0 items-start bg-[#202532] text-[#a5aab8]">
        <button type="button" className="h-[22px] w-[74px] bg-[#2c3345] pl-px text-left [clip-path:polygon(0_0,100%_0,88%_100%,0_100%)]">Layout1</button>
        <button type="button" aria-label="新建布局" className="mt-0.5 ml-1 flex h-5 w-7 items-center justify-center bg-[#2c3345] [clip-path:polygon(12%_0,100%_0,88%_100%,0_100%)]">
          {plus}
        </button>
      </div>
      <StatusBar />
      <Taskbar />
      <div className="pointer-events-none absolute top-[22px] right-[30px] flex items-center whitespace-nowrap text-white [-webkit-text-stroke:11px_black] [paint-order:stroke_fill]">
        <span className="mr-2 -mt-10 text-[60px] leading-none">@</span>
        <span className="text-[78px] leading-[100px] font-medium">飞时达软件</span>
      </div>
    </div>
  );
}
